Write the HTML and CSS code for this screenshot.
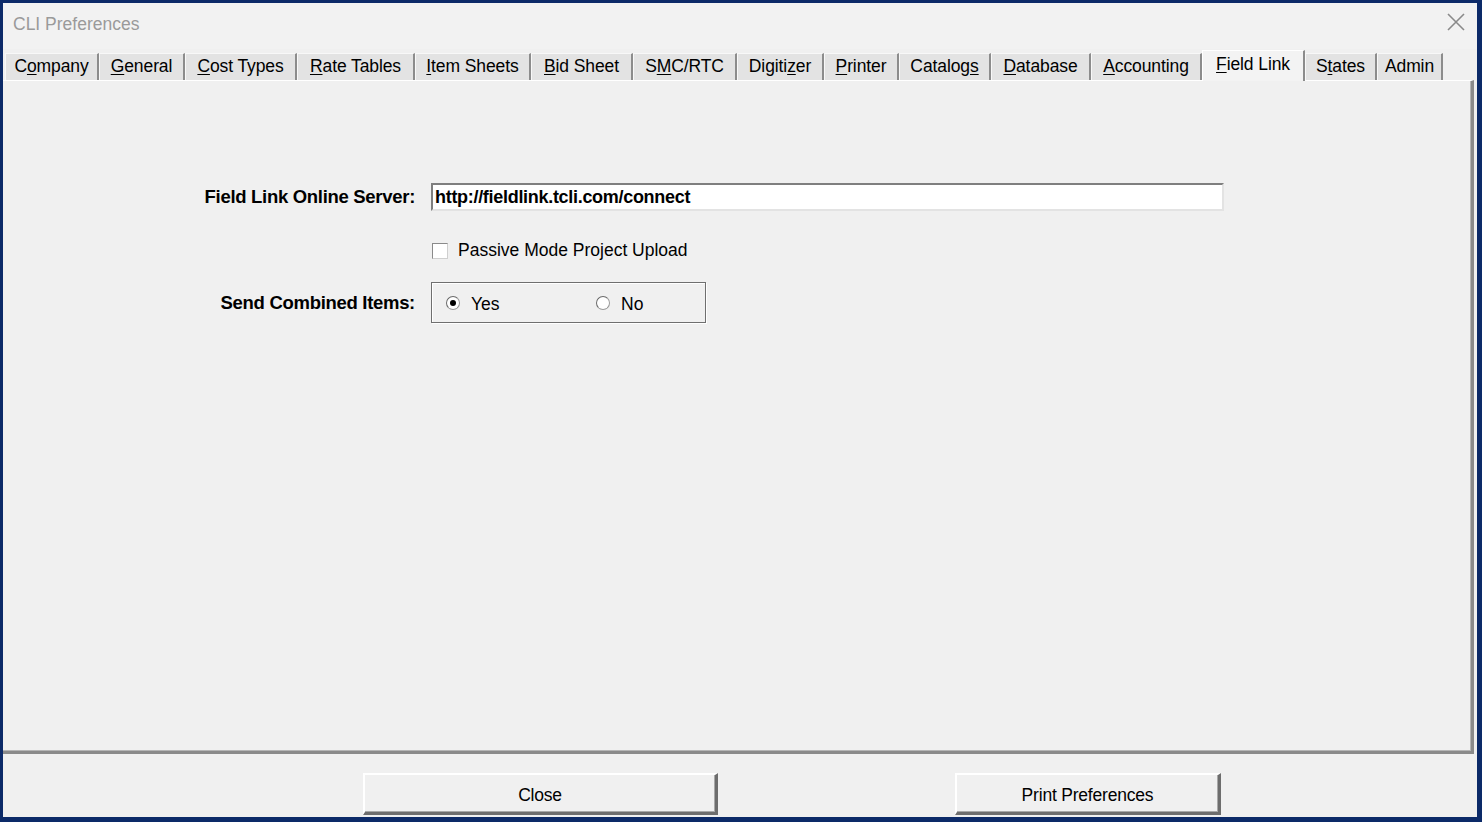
FILE: index.html
```html
<!DOCTYPE html>
<html lang="en">
<head>
    <meta charset="UTF-8" />
    <title>CLI Preferences</title>
    <link rel="stylesheet" href="styles.css">
</head>
<body>
    <div class="frame">
        <div class="titlebar">
            <span class="title">CLI Preferences</span>
            <svg class="close-x" width="18" height="18" viewBox="0 0 18 18">
                <path d="M1 1 L17 17 M17 1 L1 17" stroke="#8a8a8a" stroke-width="1.6" fill="none"/>
            </svg>
        </div>

        <div class="tabs">
            <div class="tab t-company">C<u>o</u>mpany</div>
            <div class="tab t-general"><u>G</u>eneral</div>
            <div class="tab t-cost"><u>C</u>ost Types</div>
            <div class="tab t-rate"><u>R</u>ate Tables</div>
            <div class="tab t-item"><u>I</u>tem Sheets</div>
            <div class="tab t-bid"><u>B</u>id Sheet</div>
            <div class="tab t-smc">S<u>M</u>C/RTC</div>
            <div class="tab t-digitizer">Digiti<u>z</u>er</div>
            <div class="tab t-printer"><u>P</u>rinter</div>
            <div class="tab t-catalogs">Catalog<u>s</u></div>
            <div class="tab t-database"><u>D</u>atabase</div>
            <div class="tab t-accounting"><u>A</u>ccounting</div>
            <div class="tab t-fieldlink active"><u>F</u>ield Link</div>
            <div class="tab t-states">S<u>t</u>ates</div>
            <div class="tab t-admin">Admin</div>
        </div>

        <div class="panel">
            <div class="form">
                <label class="label">Field Link Online Server:</label>
                <div class="textbox">http://fieldlink.tcli.com/connect</div>

                <div></div>
                <div class="check-row">
                    <span class="checkbox"></span>
                    <span>Passive Mode Project Upload</span>
                </div>

                <label class="label">Send Combined Items:</label>
                <div class="groupbox">
                    <div class="radio-item yes">
                        <span class="radio checked"></span>
                        <span>Yes</span>
                    </div>
                    <div class="radio-item">
                        <span class="radio"></span>
                        <span>No</span>
                    </div>
                </div>
            </div>
        </div>

        <div class="footer">
            <button class="btn btn-close">Close</button>
            <button class="btn btn-print">Print Preferences</button>
        </div>
    </div>
</body>
</html>
```

FILE: styles.css
```css
body {
    margin: 0;
    padding: 0;
    background-color: #ffffff;
    font-family: "Liberation Sans", Arial, sans-serif;
    color: #000000;
}

.frame {
    width: 1482px;
    height: 822px;
    box-sizing: border-box;
    border-style: solid;
    border-color: #0c2a68;
    border-width: 3px 5px 5px 3px;
    background-color: #f0f0f0;
    display: flex;
    flex-direction: column;
}

.titlebar {
    height: 46px;
    display: flex;
    align-items: center;
    justify-content: space-between;
    padding: 0 12px 0 10px;
    background-color: #f2f2f2;
}

.title {
    font-size: 17.5px;
    color: #9a9a9a;
    margin-top: -4px;
}

.close-x {
    margin-top: -8px;
}

/* tab strip */
.tabs {
    height: 31px;
    display: flex;
    align-items: flex-end;
    padding-left: 2px;
}

.tab {
    height: 27px;
    box-sizing: border-box;
    font-size: 17.5px;
    line-height: 24px;
    text-align: center;
    background-color: #e3e3e3;
    border-top: 1px solid #f8f8f8;
    border-left: 1px solid #f8f8f8;
    border-right: 2px solid #8c8c8c;
    white-space: nowrap;
    letter-spacing: -0.1px;
}

.tab.active {
    height: 31px;
    line-height: 27px;
    background-color: #f3f3f3;
    border-top: 1px solid #ffffff;
    border-left: 1px solid #ffffff;
    margin-bottom: -1px;
    position: relative;
    z-index: 1;
}

.tab u {
    text-underline-offset: 2px;
}

.t-company { width: 94px; }
.t-general { width: 86px; }
.t-cost { width: 112px; }
.t-rate { width: 118px; }
.t-item { width: 116px; }
.t-bid { width: 102px; }
.t-smc { width: 104px; }
.t-digitizer { width: 87px; }
.t-printer { width: 75px; }
.t-catalogs { width: 92px; }
.t-database { width: 100px; }
.t-accounting { width: 111px; }
.t-fieldlink { width: 103px; }
.t-states { width: 72px; }
.t-admin { width: 66px; }

/* page */
.panel {
    height: 674px;
    box-sizing: border-box;
    border-top: 1px solid #ffffff;
    border-right: 3px solid #8a8a8a;
    border-bottom: 3px solid #8a8a8a;
    box-shadow: inset -1px -1px 0 #b5b5b5;
    margin-right: 3px;
    background-color: #f0f0f0;
}

.form {
    display: grid;
    grid-template-columns: 412px 800px;
    column-gap: 16px;
    padding-top: 102px;
}

.label {
    font-size: 18.5px;
    font-weight: bold;
    text-align: right;
    letter-spacing: -0.3px;
    align-self: center;
}

.textbox {
    width: 793px;
    height: 28px;
    box-sizing: border-box;
    background-color: #ffffff;
    border-top: 2px solid #7f7f7f;
    border-left: 2px solid #7f7f7f;
    border-right: 2px solid #e3e3e3;
    border-bottom: 2px solid #e3e3e3;
    font-size: 18px;
    font-weight: bold;
    line-height: 24px;
    padding-left: 2px;
    letter-spacing: -0.3px;
}

.check-row {
    display: flex;
    align-items: center;
    gap: 10px;
    margin-top: 29px;
    margin-bottom: 21px;
    font-size: 17.5px;
    padding-left: 1px;
}

.checkbox {
    width: 16px;
    height: 16px;
    box-sizing: border-box;
    background-color: #ffffff;
    border: 1px solid #8a8a8a;
    border-right-color: #cfcfcf;
    border-bottom-color: #cfcfcf;
}

.groupbox {
    width: 275px;
    height: 41px;
    box-sizing: border-box;
    border: 1px solid #6f6f6f;
    box-shadow: inset 1px 1px 0 #ffffff, 1px 1px 0 #ffffff;
    display: flex;
    align-items: center;
    padding: 4px 0 0 14px;
    font-size: 17.5px;
}

.radio-item {
    display: flex;
    align-items: center;
    gap: 11px;
}

.radio-item.yes {
    width: 150px;
}

.radio {
    width: 14px;
    height: 14px;
    box-sizing: border-box;
    border-radius: 50%;
    background-color: #ffffff;
    border: 1px solid #9a9a9a;
    border-top-color: #6a6a6a;
    border-left-color: #6a6a6a;
    position: relative;
    margin-top: -4px;
}

.radio.checked::after {
    content: "";
    position: absolute;
    left: 3px;
    top: 3px;
    width: 6px;
    height: 6px;
    border-radius: 50%;
    background-color: #000000;
}

/* bottom buttons */
.footer {
    flex: 1;
    display: flex;
    align-items: flex-start;
    padding: 19px 0 0 360px;
    gap: 237px;
}

.btn {
    height: 42px;
    font-family: "Liberation Sans", Arial, sans-serif;
    font-size: 17.5px;
    color: #000000;
    background-color: #f0f0f0;
    border-style: solid;
    border-width: 2px 3px 3px 2px;
    border-color: #ffffff #6d6d6d #6d6d6d #ffffff;
    box-shadow: inset -1px -1px 0 #a8a8a8;
    padding: 3px 0 0 0;
    letter-spacing: -0.2px;
}

.btn-close {
    width: 355px;
}

.btn-print {
    width: 266px;
}
```
